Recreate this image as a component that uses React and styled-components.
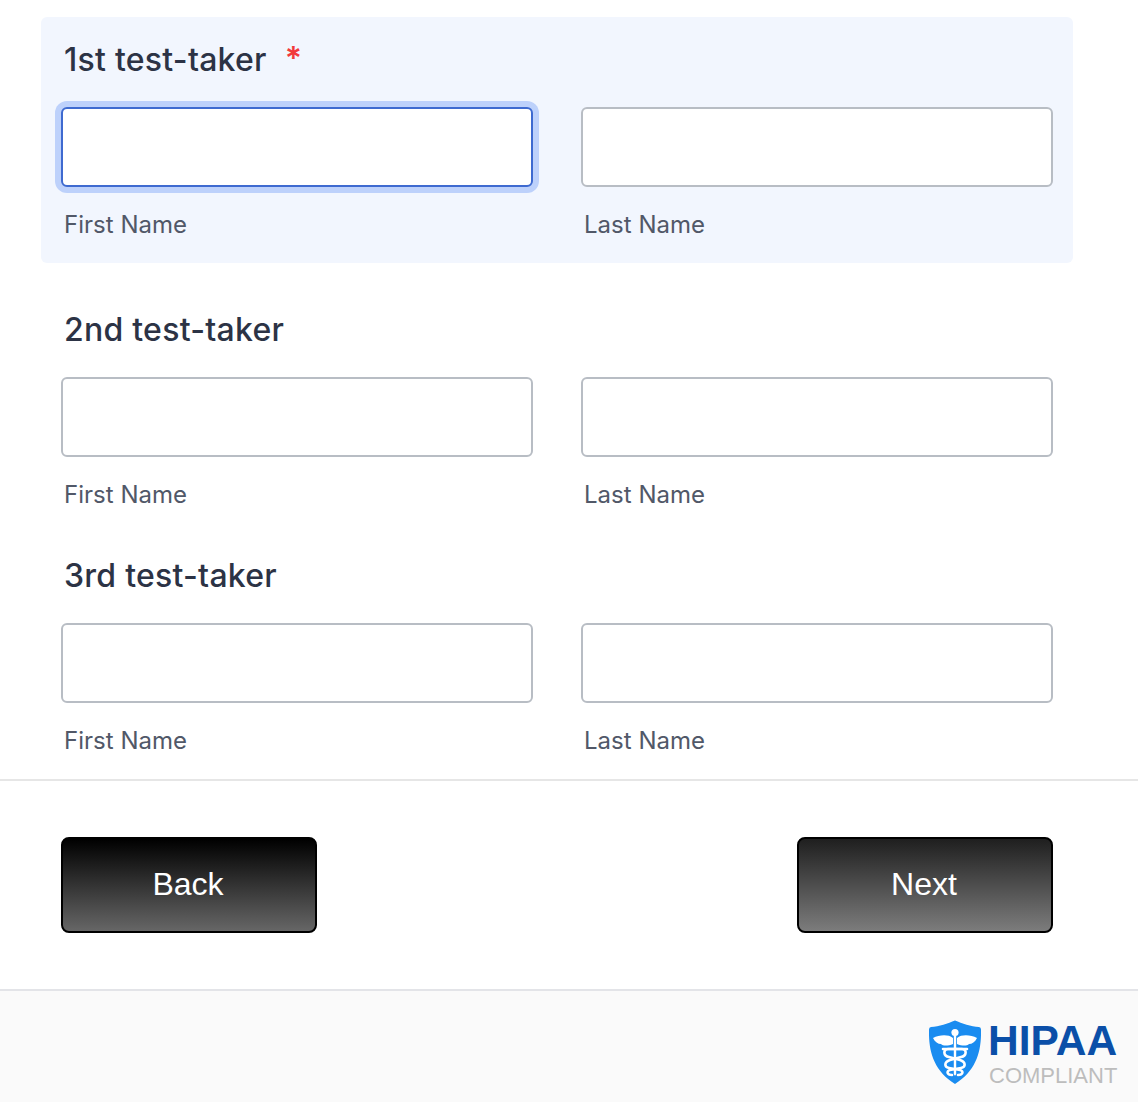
import React from 'react';
import styled, { createGlobalStyle } from 'styled-components';

const GlobalStyle = createGlobalStyle`
  html, body {
    margin: 0;
    padding: 0;
    background: #ffffff;
    font-family: Inter, "Liberation Sans", sans-serif;
  }
`;

const Page = styled.div`
  width: 1138px;
  height: 1102px;
  overflow: hidden;
  display: flex;
  flex-direction: column;
  background: #ffffff;
`;

const Fields = styled.div`
  display: flex;
  flex-direction: column;
  padding: 17px 65px 0 41px;
`;

const Group = styled.div`
  flex: none;
  height: 246px;
  box-sizing: border-box;
  padding: 24px 20px 0;
  border-radius: 6px;
  background: ${(p) => (p.$active ? '#f2f6fe' : 'transparent')};
  margin-bottom: ${(p) => (p.$active ? '24px' : '0')};
`;

const Heading = styled.div`
  height: 38px;
  margin: 0 0 28px 3px;
  display: flex;
  align-items: center;
  gap: 18px;
  font-size: 32px;
  line-height: 38px;
  font-weight: 450;
  letter-spacing: 0.25px;
  color: #2c3345;
`;

const Star = styled.span`
  font-size: 32px;
  line-height: 38px;
  font-weight: 600;
  letter-spacing: 0;
  color: #f23a3c;
  position: relative;
  top: -1px;
`;

const Row = styled.div`
  display: grid;
  grid-template-columns: 472px 472px;
  column-gap: 48px;
`;

const Cell = styled.div`
  display: flex;
  flex-direction: column;
`;

const Input = styled.div`
  height: 80px;
  box-sizing: border-box;
  background: #ffffff;
  border-radius: 6px;
  border: 2px solid ${(p) => (p.$focused ? '#3e6ad0' : '#b8bdc4')};
  box-shadow: ${(p) => (p.$focused ? '0 0 0 6px #bdd1fb' : 'none')};
`;

const Label = styled.label`
  margin: 23px 0 0 3px;
  font-size: 24px;
  line-height: 30px;
  letter-spacing: 0.02px;
  color: #515868;
`;

const ButtonBar = styled.div`
  flex: none;
  height: 212px;
  box-sizing: border-box;
  border-top: 2px solid #e6e6e6;
  border-bottom: 2px solid #e3e4e8;
  padding: 56px 85px 0 61px;
  display: flex;
  justify-content: space-between;
  align-items: flex-start;
`;

const NavButton = styled.button`
  width: 256px;
  height: 96px;
  box-sizing: border-box;
  border: 2px solid #000000;
  border-radius: 8px;
  padding: 0 2px 2px 0;
  color: #ffffff;
  font-family: "Liberation Sans", Arial, sans-serif;
  font-size: 32px;
  background: ${(p) =>
    p.$light
      ? 'linear-gradient(180deg, #1f1f1f 0%, #7c7c7c 100%)'
      : 'linear-gradient(180deg, #000000 0%, #666666 100%)'};
`;

const Footer = styled.div`
  flex: 1;
  background: #fafafa;
  display: flex;
  justify-content: flex-end;
  align-items: flex-start;
  padding: 29px 22px 0 0;
`;

const Badge = styled.div`
  display: flex;
  align-items: flex-start;
  gap: 7px;
`;

const BadgeText = styled.div`
  display: flex;
  flex-direction: column;
  gap: 1px;
  margin-top: -1px;
  width: 128px;
  font-family: "Liberation Sans", Arial, sans-serif;
`;

const BadgeTitle = styled.span`
  font-size: 42.5px;
  line-height: 44px;
  font-weight: 700;
  color: #0b4fa8;
`;

const BadgeSub = styled.span`
  font-size: 22px;
  line-height: 24px;
  margin-left: 1px;
  color: #bdbdbd;
`;

const ShieldIcon = () => (
  <svg width="52" height="64" viewBox="0 0 52 64" fill="none">
    <path
      d="M26 .5 C33 3.5 42 6.5 50 7 Q52 7.2 52 9.5 C52.5 30 48 50 26 64 C4 50 -.5 30 0 9.5 Q0 7.2 2 7 C10 6.5 19 3.5 26 .5 Z"
      fill="#1a8cf0"
    />
    <circle cx="26" cy="12.5" r="3.6" fill="#fff" />
    <path d="M24.8 13 H27.2 V54 Q26 57 24.8 54 Z" fill="#fff" />
    <path
      d="M24 18 C19 14 10 15 4 18 C6 22 9 24 12 24 C14 26 19 26 24 24 Z"
      fill="#fff"
    />
    <path
      d="M28 18 C33 14 42 15 48 18 C46 22 43 24 40 24 C38 26 33 26 28 24 Z"
      fill="#fff"
    />
    <path
      d="M14 29 H33 C38 29 38 36 32 37 L21 40 C15 42 15 47 20 48 L31 50 C35 51 34 55 29 55"
      stroke="#fff"
      strokeWidth="2.6"
      strokeLinecap="round"
    />
    <path
      d="M38 29 H19 C14 29 14 36 20 37 L31 40 C37 42 37 47 32 48 L21 50 C17 51 18 55 23 55"
      stroke="#fff"
      strokeWidth="2.6"
      strokeLinecap="round"
    />
  </svg>
);

const takers = [
  { title: '1st test-taker', active: true },
  { title: '2nd test-taker' },
  { title: '3rd test-taker' },
];

const App = () => (
  <Page>
    <GlobalStyle />
    <Fields>
      {takers.map((t) => (
        <Group key={t.title} $active={t.active}>
          <Heading>
            {t.title}
            {t.active && <Star>*</Star>}
          </Heading>
          <Row>
            <Cell>
              <Input $focused={t.active} />
              <Label>First Name</Label>
            </Cell>
            <Cell>
              <Input />
              <Label>Last Name</Label>
            </Cell>
          </Row>
        </Group>
      ))}
    </Fields>
    <ButtonBar>
      <NavButton>Back</NavButton>
      <NavButton $light>Next</NavButton>
    </ButtonBar>
    <Footer>
      <Badge>
        <ShieldIcon />
        <BadgeText>
          <BadgeTitle>HIPAA</BadgeTitle>
          <BadgeSub>COMPLIANT</BadgeSub>
        </BadgeText>
      </Badge>
    </Footer>
  </Page>
);

export default App;
